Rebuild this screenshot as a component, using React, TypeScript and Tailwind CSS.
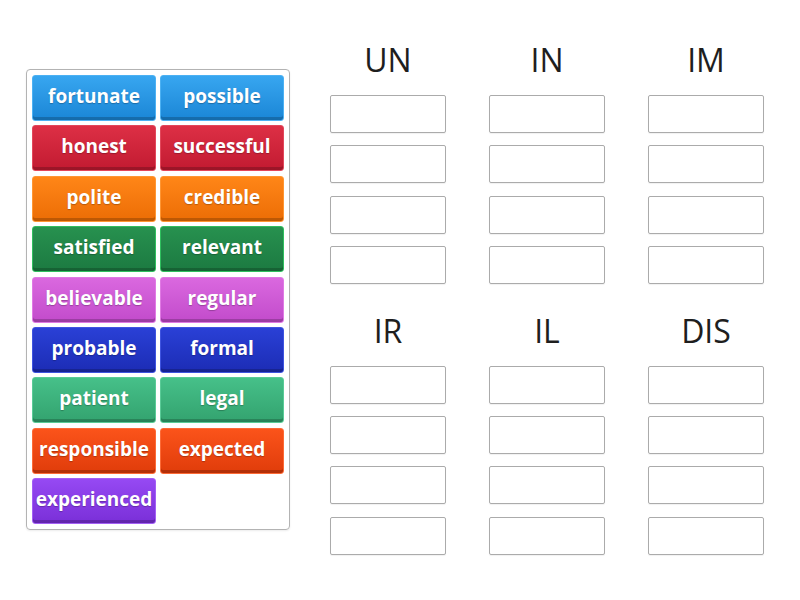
import React from "react";

type Tile = { label: string; bg: string };

const tiles: Tile[] = [
  { label: "fortunate", bg: "bg-gradient-to-b from-[#37a6f0] to-[#1a86d6] border-[#4cb1f3]" },
  { label: "possible", bg: "bg-gradient-to-b from-[#37a6f0] to-[#1a86d6] border-[#4cb1f3]" },
  { label: "honest", bg: "bg-gradient-to-b from-[#dd2f45] to-[#c21a31] border-[#e2475b]" },
  { label: "successful", bg: "bg-gradient-to-b from-[#dd2f45] to-[#c21a31] border-[#e2475b]" },
  { label: "polite", bg: "bg-gradient-to-b from-[#ff8617] to-[#ec6d05] border-[#ff9633]" },
  { label: "credible", bg: "bg-gradient-to-b from-[#ff8617] to-[#ec6d05] border-[#ff9633]" },
  { label: "satisfied", bg: "bg-gradient-to-b from-[#27914f] to-[#1c7a41] border-[#2fbf5e]" },
  { label: "relevant", bg: "bg-gradient-to-b from-[#27914f] to-[#1c7a41] border-[#2fbf5e]" },
  { label: "believable", bg: "bg-gradient-to-b from-[#da68df] to-[#c24bcb] border-[#e07ae4]" },
  { label: "regular", bg: "bg-gradient-to-b from-[#da68df] to-[#c24bcb] border-[#e07ae4]" },
  { label: "probable", bg: "bg-gradient-to-b from-[#2a40d6] to-[#1c2cb5] border-[#3f54e0]" },
  { label: "formal", bg: "bg-gradient-to-b from-[#2a40d6] to-[#1c2cb5] border-[#3f54e0]" },
  { label: "patient", bg: "bg-gradient-to-b from-[#46c089] to-[#33a36f] border-[#5acb97]" },
  { label: "legal", bg: "bg-gradient-to-b from-[#46c089] to-[#33a36f] border-[#5acb97]" },
  { label: "responsible", bg: "bg-gradient-to-b from-[#fb531a] to-[#e03c0a] border-[#fd6a36]" },
  { label: "expected", bg: "bg-gradient-to-b from-[#fb531a] to-[#e03c0a] border-[#fd6a36]" },
  { label: "experienced", bg: "bg-gradient-to-b from-[#9649f3] to-[#7a2fd8] border-[#a35ff5]" },
];

const groups1 = ["UN", "IN", "IM"];
const groups2 = ["IR", "IL", "DIS"];

function Column({ title }: { title: string }) {
  return (
    <div className="flex flex-col w-[116px]">
      <div className="h-[40px] leading-[40px] text-center text-[32px] font-normal text-[#1e1e1e]">{title}</div>
      <div className="mt-[15px] flex flex-col gap-[12.3px]">
        {[0, 1, 2, 3].map((i) => (
          <div
            key={i}
            className="h-[38px] bg-white border border-[#ababab] rounded-[2px] shadow-[0_1px_1px_rgba(0,0,0,0.06)]"
          />
        ))}
      </div>
    </div>
  );
}

export default function App() {
  return (
    <div
      className="w-[800px] h-[600px] bg-white flex items-start pl-[26px] pt-[40px]"
      style={{ fontFamily: '"Open Sans", "Noto Sans", sans-serif' }}
    >
      <div className="mt-[29px] w-[264px] h-[461px] border border-[#b3b3b3] rounded-[4px] p-[5px] shadow-[0_1px_2px_rgba(0,0,0,0.08)]">
        <div className="grid grid-cols-[124px_124px] gap-x-[4px] gap-y-[4.375px]">
          {tiles.map((t) => (
            <div
              key={t.label}
              className={`h-[46px] rounded-[3px] border flex items-center justify-center pb-[3px] shadow-[inset_0_-3px_0_rgba(0,0,0,0.2)] ${t.bg}`}
            >
              <span className="text-white font-bold text-[19px] leading-none [text-shadow:0_1px_1px_rgba(0,0,0,0.25)] whitespace-nowrap">
                {t.label}
              </span>
            </div>
          ))}
        </div>
      </div>
      <div className="ml-[40px] flex flex-col gap-[27px]">
        <div className="flex gap-[43px]">
          {groups1.map((g) => (
            <Column key={g} title={g} />
          ))}
        </div>
        <div className="flex gap-[43px]">
          {groups2.map((g) => (
            <Column key={g} title={g} />
          ))}
        </div>
      </div>
    </div>
  );
}
